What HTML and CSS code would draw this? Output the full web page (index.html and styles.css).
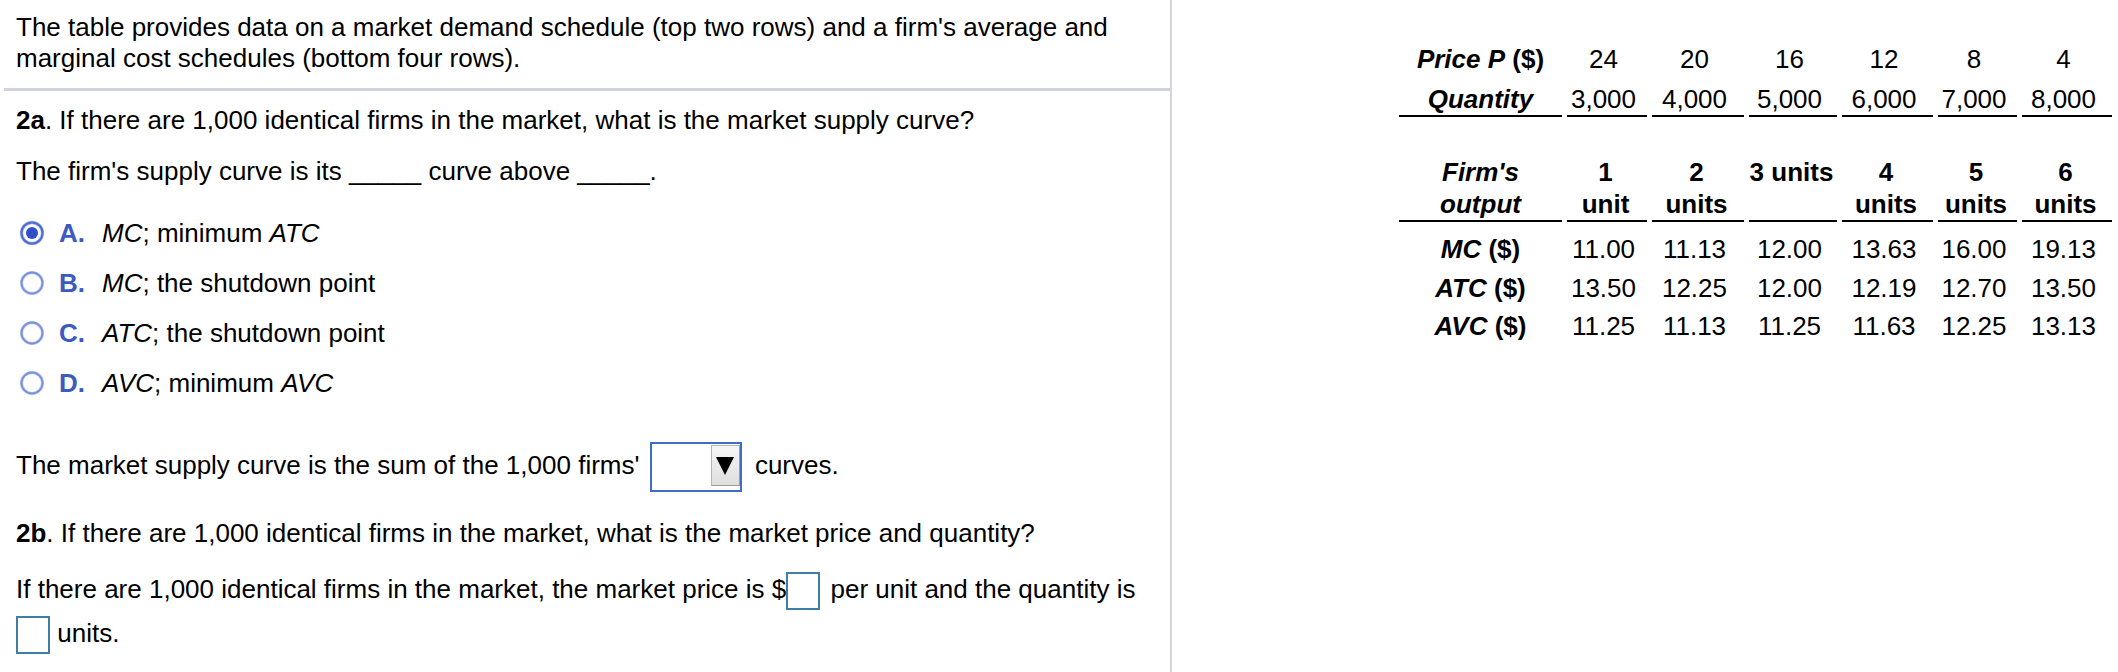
FILE: index.html
```html
<!DOCTYPE html>
<html lang="en">
<head>
<meta charset="utf-8">
<title>Market supply</title>
<link rel="stylesheet" href="styles.css">
</head>
<body>
<div class="page">
  <section class="left">
    <div class="intro">The table provides data on a market demand schedule (top two rows) and a firm's average and marginal cost schedules (bottom four rows).</div>
    <div class="question">
      <p class="q-title"><b>2a</b>. If there are 1,000 identical firms in the market, what is the market supply curve?</p>
      <p class="q-text">The firm's supply curve is its _____ curve above _____.</p>
      <ul class="options">
        <li class="opt">
          <svg class="radio" width="26" height="26" viewBox="0 0 26 26"><circle cx="13" cy="13" r="10.5" fill="#fff" stroke="#a9b8ec" stroke-width="3.4"/><circle cx="13" cy="13" r="10.5" fill="none" stroke="#4e6dd2" stroke-width="2"/><circle cx="13" cy="13" r="6" fill="#2f50c6"/></svg>
          <span class="letter">A.</span><span class="opt-text"><i>MC</i>; minimum <i>ATC</i></span>
        </li>
        <li class="opt">
          <svg class="radio" width="26" height="26" viewBox="0 0 26 26"><circle cx="13" cy="13" r="10.5" fill="#fff" stroke="#c3cdf2" stroke-width="3.2"/><circle cx="13" cy="13" r="10.5" fill="none" stroke="#7890df" stroke-width="1.8"/></svg>
          <span class="letter">B.</span><span class="opt-text"><i>MC</i>; the shutdown point</span>
        </li>
        <li class="opt">
          <svg class="radio" width="26" height="26" viewBox="0 0 26 26"><circle cx="13" cy="13" r="10.5" fill="#fff" stroke="#c3cdf2" stroke-width="3.2"/><circle cx="13" cy="13" r="10.5" fill="none" stroke="#7890df" stroke-width="1.8"/></svg>
          <span class="letter">C.</span><span class="opt-text"><i>ATC</i>; the shutdown point</span>
        </li>
        <li class="opt">
          <svg class="radio" width="26" height="26" viewBox="0 0 26 26"><circle cx="13" cy="13" r="10.5" fill="#fff" stroke="#c3cdf2" stroke-width="3.2"/><circle cx="13" cy="13" r="10.5" fill="none" stroke="#7890df" stroke-width="1.8"/></svg>
          <span class="letter">D.</span><span class="opt-text"><i>AVC</i>; minimum <i>AVC</i></span>
        </li>
      </ul>
      <p class="sel-line">The market supply curve is the sum of the 1,000 firms' <span class="dropdown"><span class="dd-btn"><svg width="18" height="18" viewBox="0 0 18 18"><polygon points="0,0 18,0 9,18" fill="#000"/></svg></span></span> curves.</p>
      <p class="q-title b2"><b>2b</b>. If there are 1,000 identical firms in the market, what is the market price and quantity?</p>
      <p class="inputs-line">If there are 1,000 identical firms in the market, the market price is $<span class="blank"></span> per unit and the quantity is <span class="blank first"></span> units.</p>
    </div>
  </section>
  <section class="right">
    <table class="data demand">
      <colgroup><col class="c0"><col class="c1"><col class="c2"><col class="c3"><col class="c4"><col class="c5"><col class="c6"></colgroup>
      <tr class="r-top">
        <td class="lbl"><i>Price P</i> ($)</td><td>24</td><td>20</td><td>16</td><td>12</td><td>8</td><td>4</td>
      </tr>
      <tr class="r-head-end">
        <td class="lbl"><i>Quantity</i></td><td>3,000</td><td>4,000</td><td>5,000</td><td>6,000</td><td>7,000</td><td>8,000</td>
      </tr>
    </table>
    <table class="data cost">
      <colgroup><col class="c0"><col class="c1"><col class="c2"><col class="c3"><col class="c4"><col class="c5"><col class="c6"></colgroup>
      <tr class="r-head-end r-firm">
        <td class="lbl"><i>Firm's<br>output</i></td>
        <td class="hd">1<br>unit</td><td class="hd">2<br>units</td><td class="hd">3 units</td><td class="hd">4<br>units</td><td class="hd">5<br>units</td><td class="hd">6<br>units</td>
      </tr>
      <tr class="r-first">
        <td class="lbl"><i>MC</i> ($)</td><td>11.00</td><td>11.13</td><td>12.00</td><td>13.63</td><td>16.00</td><td>19.13</td>
      </tr>
      <tr class="r-body">
        <td class="lbl"><i>ATC</i> ($)</td><td>13.50</td><td>12.25</td><td>12.00</td><td>12.19</td><td>12.70</td><td>13.50</td>
      </tr>
      <tr class="r-body">
        <td class="lbl"><i>AVC</i> ($)</td><td>11.25</td><td>11.13</td><td>11.25</td><td>11.63</td><td>12.25</td><td>13.13</td>
      </tr>
    </table>
  </section>
</div>
</body>
</html>
```
FILE: styles.css
```css
html, body {
  margin: 0;
  padding: 0;
  background: #fff;
}

body {
  font-family: "Liberation Sans", Arial, Helvetica, sans-serif;
  font-size: 26px;
  color: #000;
}

.page {
  display: flex;
  min-height: 672px;
}

.left {
  width: 1170px;
  flex: 0 0 1170px;
  border-right: 2px solid #d3d6e2;
}

.intro {
  margin-left: 4px;
  padding: 12px 16px 14px 12px;
  line-height: 31px;
  border-bottom: 3px solid #cfd3de;
}

.question {
  padding: 0 16px;
}

.question p {
  margin: 0;
  line-height: 31px;
}

.q-title {
  margin-top: 14px !important;
}

.q-text {
  margin-top: 20px !important;
}

.options {
  list-style: none;
  margin: 21px 0 0;
  padding: 0;
}

.opt {
  display: flex;
  align-items: center;
  height: 50px;
  padding-left: 3px;
}

.radio {
  flex: 0 0 26px;
  margin-right: 14px;
}

.letter {
  width: 43px;
  font-weight: bold;
  color: #3c5bc0;
}

.sel-line {
  margin-top: 34px !important;
}

.dropdown {
  display: inline-flex;
  justify-content: flex-end;
  align-items: flex-start;
  width: 92px;
  height: 50px;
  box-sizing: border-box;
  border: 2px solid #3f6bc9;
  padding-top: 1px;
  vertical-align: middle;
  margin: 0 6px 0 3px;
  background: #fff;
}

.dd-btn {
  display: flex;
  align-items: center;
  justify-content: center;
  width: 29px;
  height: 41px;
  box-sizing: border-box;
  border: 1px solid #b4b4b4;
  border-right-color: #9c9c9c;
  border-bottom-color: #9c9c9c;
  background: linear-gradient(#f6f6f6, #dedede);
}

.b2 {
  margin-top: 26px !important;
}

.question .inputs-line {
  margin-top: 18px;
  line-height: 44px;
}

.blank {
  display: inline-block;
  width: 34px;
  height: 38px;
  box-sizing: border-box;
  border: 2px solid #3e7ea5;
  vertical-align: middle;
  margin-right: 3px;
  background: #fff;
}

.blank.first {
  margin-right: 0;
}

.right {
  flex: 1;
  display: flex;
  flex-direction: column;
  align-items: flex-end;
  padding-top: 39px;
  padding-right: 1px;
}

.data {
  table-layout: fixed;
  width: 723px;
  border-collapse: separate;
  border-spacing: 5px 0;
  font-size: 26px;
}

.cost {
  margin-top: 35px;
}

.c0 { width: 163px; }
.c1 { width: 80px; }
.c2 { width: 92px; }
.c3 { width: 88px; }
.c4 { width: 91px; }
.c5 { width: 79px; }
.c6 { width: 90px; }

.data td {
  padding: 4px 7px 4px 0;
  line-height: 32px;
  text-align: center;
  vertical-align: top;
  white-space: nowrap;
}

.data td.lbl {
  padding-right: 0;
  font-weight: bold;
}

.data td.hd {
  padding-right: 3px;
  font-weight: bold;
}

.r-head-end td {
  padding-bottom: 0;
  border-bottom: 2px solid #000;
}

.r-first td {
  padding-top: 11px;
  padding-bottom: 4px;
}

.r-body td {
  padding-top: 3px;
  padding-bottom: 3px;
}
```
